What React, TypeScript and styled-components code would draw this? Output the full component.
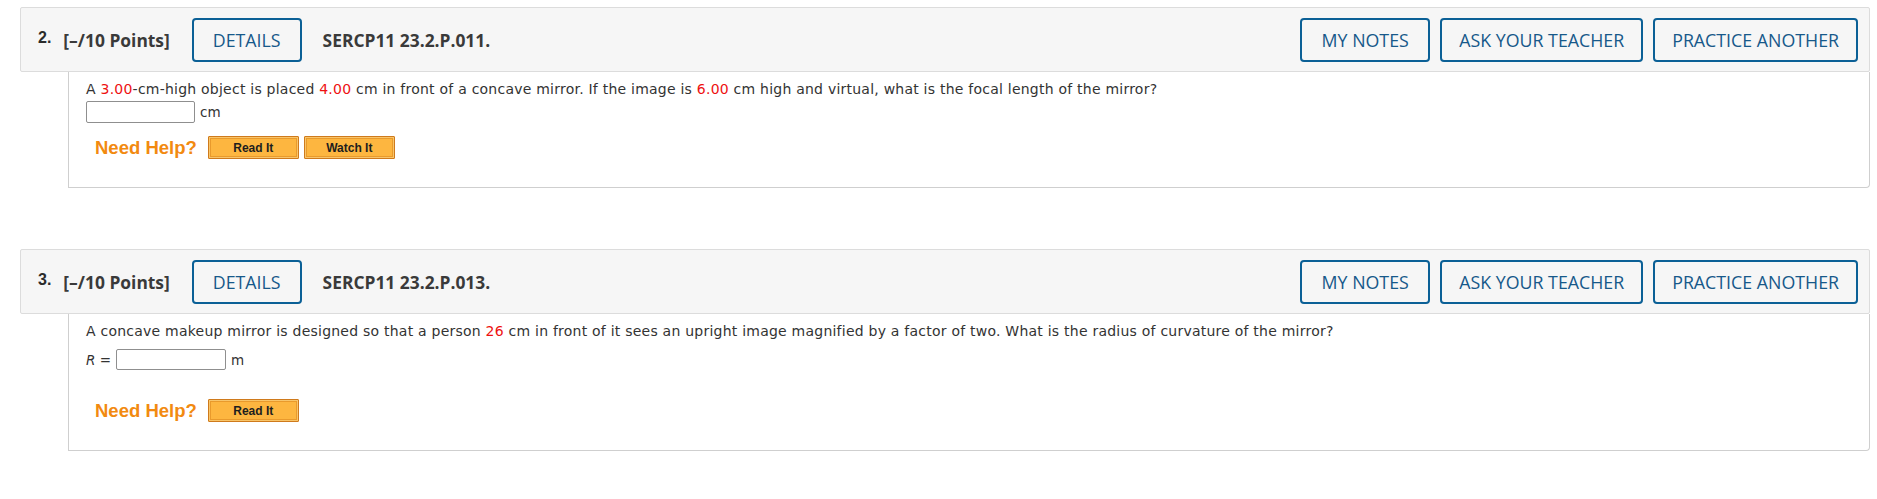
import React from "react";
import styled, { createGlobalStyle } from "styled-components";

const Global = createGlobalStyle`
  html, body { margin: 0; padding: 0; background: #fff; }
  body { font-family: "DejaVu Sans", Verdana, sans-serif; }
`;

const Page = styled.div`
  width: 1850px;
  padding: 7px 0 0 20px;
  display: flex;
  flex-direction: column;
  gap: 61px;
`;

const Question = styled.section`
  display: flex;
  flex-direction: column;
`;

const Header = styled.div`
  box-sizing: border-box;
  height: 65px;
  display: flex;
  align-items: center;
  padding: 0 11px 0 17px;
  background: #f6f6f6;
  border: 1px solid #dcdcdc;
  border-radius: 2px;
`;

const Num = styled.span`
  font-family: "Liberation Sans", Arial, sans-serif;
  font-weight: 700;
  font-size: 16px;
  color: #2b2b2b;
  margin-right: 12px;
  position: relative;
  top: -2px;
`;

const Points = styled.span`
  font-family: "Open Sans", sans-serif;
  font-weight: 700;
  font-size: 17.4px;
  color: #3a3a3a;
`;

const OutlineButton = styled.button<{ $ml?: number; $px?: number }>`
  box-sizing: border-box;
  height: 44px;
  margin-left: ${(p) => p.$ml ?? 0}px;
  padding: 0 ${(p) => p.$px ?? 17}px;
  background: transparent;
  border: 2px solid #0b6096;
  border-radius: 4px;
  font-family: "Open Sans", sans-serif;
  font-size: 17.8px;
  color: #17598a;
  cursor: pointer;
`;

const Code = styled.span`
  margin-left: 21px;
  font-family: "Open Sans", sans-serif;
  font-weight: 700;
  font-size: 17.4px;
  color: #3a3a3a;
`;

const Actions = styled.div`
  margin-left: auto;
  display: flex;
  gap: 10px;
`;

const Body = styled.div<{ $pt: number; $pb: number }>`
  margin-left: 48px;
  padding: ${(p) => p.$pt}px 17px ${(p) => p.$pb}px 17px;
  border: 1px solid #cfcfcf;
  border-top: none;
  border-bottom-right-radius: 4px;
  display: flex;
  flex-direction: column;
  align-items: flex-start;
`;

const Prompt = styled.div`
  font-family: "DejaVu Sans", Verdana, sans-serif;
  font-size: 14px;
  letter-spacing: 0.23px;
  line-height: 16px;
  color: #333;
  white-space: nowrap;
`;

const Val = styled.span`
  color: #ee1111;
`;

const AnswerRow = styled.div<{ $mt: number }>`
  margin-top: ${(p) => p.$mt}px;
  display: flex;
  align-items: center;
  gap: 5px;
  font-family: "DejaVu Sans", Verdana, sans-serif;
  font-size: 13.5px;
  color: #333;
`;

const Var = styled.i``;

const AnswerInput = styled.input<{ $w: number; $h: number }>`
  box-sizing: border-box;
  width: ${(p) => p.$w}px;
  height: ${(p) => p.$h}px;
  border: 1px solid #8f8f8f;
  border-radius: 2px;
  background: #fff;
  margin: 0;
`;

const HelpRow = styled.div<{ $mt: number }>`
  margin-top: ${(p) => p.$mt}px;
  margin-left: 9px;
  display: flex;
  align-items: center;
  gap: 5px;
`;

const NeedHelp = styled.span`
  font-family: "Liberation Sans", Arial, sans-serif;
  font-weight: 700;
  font-size: 18.5px;
  color: #f28a10;
  margin-right: 6px;
`;

const HelpButton = styled.button`
  box-sizing: border-box;
  width: 91px;
  height: 23px;
  padding: 0;
  border: 1px solid #cf7a1c;
  border-radius: 1px;
  background: #fdb640;
  box-shadow: inset 0 0 0 1px #f8c56a, inset 0 0 0 2px #e99a2c;
  font-family: "Liberation Sans", Arial, sans-serif;
  font-weight: 700;
  font-size: 12px;
  color: #1e1e1e;
  cursor: pointer;
`;

type Q = {
  num: string;
  code: string;
  prompt: React.ReactNode;
  variable?: string;
  unit: string;
  helps: string[];
  pt: number;
  pb: number;
  inputMt: number;
  helpMt: number;
  inputW: number;
  inputH: number;
};

const questions: Q[] = [
  {
    num: "2.",
    code: "SERCP11 23.2.P.011.",
    prompt: (
      <>
        A <Val>3.00</Val>-cm-high object is placed <Val>4.00</Val> cm in front of a concave mirror. If the image is{" "}
        <Val>6.00</Val> cm high and virtual, what is the focal length of the mirror?
      </>
    ),
    unit: "cm",
    helps: ["Read It", "Watch It"],
    pt: 9,
    pb: 28,
    inputMt: 4,
    inputW: 109,
    inputH: 22,
    helpMt: 13,
  },
  {
    num: "3.",
    code: "SERCP11 23.2.P.013.",
    prompt: (
      <>
        A concave makeup mirror is designed so that a person <Val>26</Val> cm in front of it sees an upright image
        magnified by a factor of two. What is the radius of curvature of the mirror?
      </>
    ),
    variable: "R",
    unit: "m",
    helps: ["Read It"],
    pt: 9,
    pb: 28,
    inputMt: 10,
    inputW: 110,
    inputH: 21,
    helpMt: 29,
  },
];

export default function App() {
  return (
    <>
      <Global />
      <Page>
        {questions.map((q) => (
          <Question key={q.num}>
            <Header>
              <Num>{q.num}</Num>
              <Points>[–/10 Points]</Points>
              <OutlineButton $ml={22} $px={19}>DETAILS</OutlineButton>
              <Code>{q.code}</Code>
              <Actions>
                <OutlineButton $px={19.5}>MY NOTES</OutlineButton>
                <OutlineButton>ASK YOUR TEACHER</OutlineButton>
                <OutlineButton>PRACTICE ANOTHER</OutlineButton>
              </Actions>
            </Header>
            <Body $pt={q.pt} $pb={q.pb}>
              <Prompt>{q.prompt}</Prompt>
              <AnswerRow $mt={q.inputMt}>
                {q.variable && (
                  <span>
                    <Var>{q.variable}</Var> =
                  </span>
                )}
                <AnswerInput $w={q.inputW} $h={q.inputH} />
                <span>{q.unit}</span>
              </AnswerRow>
              <HelpRow $mt={q.helpMt}>
                <NeedHelp>Need Help?</NeedHelp>
                {q.helps.map((h) => (
                  <HelpButton key={h}>{h}</HelpButton>
                ))}
              </HelpRow>
            </Body>
          </Question>
        ))}
      </Page>
    </>
  );
}
